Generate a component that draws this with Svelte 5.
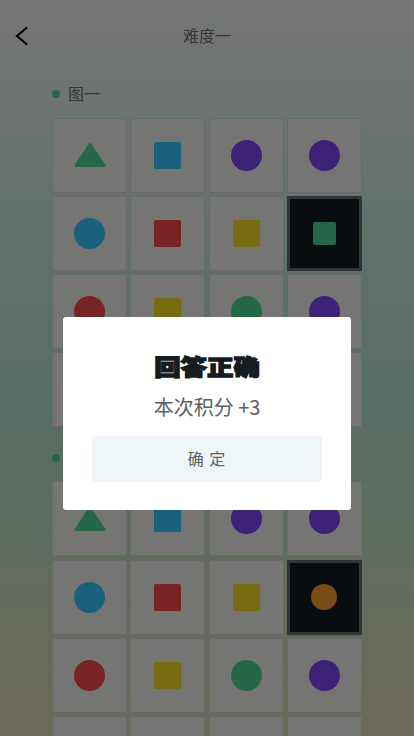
<script lang="ts">
  type Item = { shape: string; color: string; dark?: boolean };

  const p = '#7a45f0', b = '#36c0f8', g = '#4dcf90', r = '#f04848', y = '#f0d820', o = '#f59a2c';

  const top: Item[] = [
    { shape: 'tri', color: g }, { shape: 'sq', color: b }, { shape: 'dot', color: p }, { shape: 'dot', color: p },
    { shape: 'dot', color: b }, { shape: 'sq', color: r }, { shape: 'sq', color: y }, { shape: 'sq', color: g, dark: true },
    { shape: 'dot', color: r }, { shape: 'sq', color: y }, { shape: 'dot', color: g }, { shape: 'dot', color: p },
    { shape: 'none', color: '' }, { shape: 'none', color: '' }, { shape: 'none', color: '' }, { shape: 'none', color: '' }
  ];
  const bottom: Item[] = top.map((it, i) => (i === 7 ? { shape: 'dot', color: o, dark: true } : it));

  const sections = [
    { title: '图一', items: top },
    { title: '图二', items: bottom }
  ];
</script>

<div class="page">
  <header class="bar">
    <svg class="back" viewBox="0 0 14 22" width="14" height="22">
      <path d="M12 2.5 L2 11 L12 19.5" fill="none" stroke="#000" stroke-width="2.2" />
    </svg>
    <h1>难度一</h1>
  </header>

  {#each sections as sec}
    <section class="sec">
      <div class="label"><i></i><span>{sec.title}</span></div>
      <div class="grid">
        {#each sec.items as it}
          <div class="cell" class:dark={it.dark}>
            {#if it.shape === 'tri'}
              <svg viewBox="0 0 32 26" width="32" height="26">
                <path d="M16 2.5 L30 23.5 H2 Z" fill={it.color} stroke={it.color} stroke-width="3" stroke-linejoin="round" />
              </svg>
            {:else if it.shape !== 'none'}
              <div class={it.shape} style="background:{it.color}"></div>
            {/if}
          </div>
        {/each}
      </div>
    </section>
  {/each}

  <div class="mask">
    <div class="dialog">
      <div class="title">回答正确</div>
      <div class="score">本次积分 +3</div>
      <div class="ok">确 定</div>
    </div>
  </div>
</div>

<style>
  :global(body) {
    margin: 0;
  }

  .page {
    position: relative;
    width: 414px;
    height: 736px;
    overflow: hidden;
    font-family: "Noto Sans CJK SC", "Noto Sans", sans-serif;
    background: linear-gradient(to bottom, #ececec 0%, #acdcc8 55%, #dcd4b4 100%);
  }

  .bar {
    position: relative;
    height: 70.5px;
    display: flex;
    align-items: center;
    justify-content: center;
  }
  .back {
    position: absolute;
    left: 15px;
    top: 25px;
  }
  h1 {
    margin: 0;
    font-size: 16px;
    font-weight: 400;
    color: #6c6c6c;
  }

  .sec {
    padding: 0 52px;
  }
  .label {
    height: 47px;
    display: flex;
    align-items: center;
    gap: 8px;
    font-size: 16px;
    color: #6c6c6c;
  }
  .label span {
    padding-bottom: 2px;
  }
  .label i {
    width: 8px;
    height: 8px;
    border-radius: 50%;
    background: #4dcf90;
  }

  .grid {
    display: grid;
    grid-template-columns: repeat(4, 75px);
    grid-auto-rows: 75px;
    gap: 3.3px;
    margin-bottom: 7px;
  }
  .cell {
    box-sizing: border-box;
    display: flex;
    align-items: center;
    justify-content: center;
    background: #ebebe9;
    border: 1.5px solid #d0d4d1;
  }
  .cell.dark {
    background: #141a20;
    border: 3.5px solid #62686c;
  }
  .dot {
    width: 31px;
    height: 31px;
    border-radius: 50%;
  }
  .sq {
    width: 27px;
    height: 27px;
    border-radius: 2px;
  }
  .dark .dot {
    width: 26px;
    height: 26px;
  }
  .dark .sq {
    width: 23px;
    height: 23px;
  }

  .mask {
    position: absolute;
    inset: 0;
    display: flex;
    align-items: flex-start;
    justify-content: center;
    background: rgba(0, 0, 0, 0.5);
  }
  .dialog {
    margin-top: 317px;
    box-sizing: border-box;
    width: 288px;
    height: 192.5px;
    padding: 28px 29px 0;
    border-radius: 3px;
    background: #fff;
    display: flex;
    flex-direction: column;
    align-items: center;
  }
  .title {
    height: 40px;
    line-height: 40px;
    font-size: 22px;
    font-weight: 900;
    color: #161c20;
    -webkit-text-stroke: 1.3px #161c20;
    transform: scaleX(1.2);
  }
  .score {
    margin-top: 2px;
    height: 40px;
    line-height: 40px;
    font-size: 20px;
    color: #5a6065;
  }
  .ok {
    margin-top: 9px;
    width: 100%;
    height: 46px;
    line-height: 45px;
    text-align: center;
    font-size: 16px;
    letter-spacing: 1px;
    color: #5a6065;
    background: #eff6f8;
    border-radius: 4px;
  }
</style>
